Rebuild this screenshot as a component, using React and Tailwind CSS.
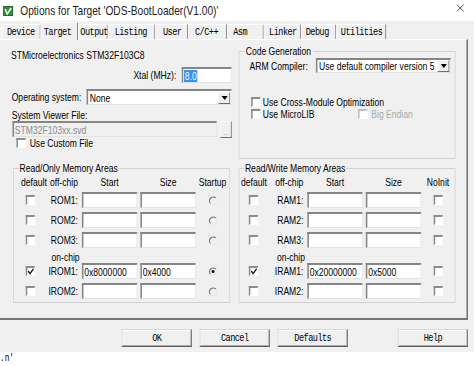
import React from "react";

const SUNKEN =
  "border-t-2 border-l-2 border-b border-r border-t-[#858585] border-l-[#858585] border-b-[#e3e3e3] border-r-[#e3e3e3]";
const RAISED =
  "bg-[#f0f0f0] border border-t-[#fafafa] border-l-[#fafafa] border-b-[#6b6b6b] border-r-[#6b6b6b]";

function Check({ checked = false, light = false }) {
  return (
    <span
      className={`relative inline-block shrink-0 w-[12px] h-[10px] bg-white border-t-2 border-l-2 border-b border-r border-b-white border-r-white ${
        light ? "border-t-[#bdbdbd] border-l-[#bdbdbd]" : "border-t-[#8c8c8c] border-l-[#8c8c8c]"
      }`}
    >
      {checked && (
        <svg className="absolute left-0 top-0" width="9" height="7" viewBox="0 0 9 7">
          <path d="M1 3 L3.5 5.6 L8 0.8" stroke="#1a1a1a" strokeWidth="1.6" fill="none" />
        </svg>
      )}
    </span>
  );
}

function Radio({ checked = false }) {
  return (
    <svg width="12" height="9" viewBox="0 0 9 9" preserveAspectRatio="none" className="shrink-0">
      <path d="M7.3 2.2 A3.6 3.6 0 0 0 2.2 7.3" stroke="#7a7a7a" strokeWidth="1.2" fill="none" />
      <path d="M7.3 2.2 A3.6 3.6 0 0 1 2.2 7.3" stroke="#e6e6e6" strokeWidth="1" fill="none" />
      {checked && <circle cx="4.6" cy="4.6" r="1.5" fill="#111" />}
    </svg>
  );
}

function Select({ value, className }) {
  return (
    <div className={`bg-white ${SUNKEN} h-full flex items-center ${className}`}>
      <span className="flex-1 pl-[2px] whitespace-nowrap overflow-hidden">{value}</span>
      <span className={`${RAISED} w-[15px] h-[12px] mr-[1px] flex items-center justify-center`}>
        <svg width="8" height="4" viewBox="0 0 8 4">
          <path d="M0 0H8L4 4Z" fill="#000" />
        </svg>
      </span>
    </div>
  );
}

function Field({ value = "" }) {
  return (
    <div className={`bg-white ${SUNKEN} w-[71px] h-[16px] flex items-center pl-[1px] whitespace-nowrap`}>
      {value}
    </div>
  );
}

function Btn({ children, className = "" }) {
  return (
    <div
      className={`h-[18px] w-[90px] flex items-center justify-center bg-[#f0f0f0] border border-t-[#d8d8d8] border-l-[#d8d8d8] border-b-[#5f5f5f] border-r-[#5f5f5f] shadow-[inset_-1px_-1px_0_#a8a8a8,inset_1px_1px_0_#ffffff] font-['Liberation_Mono',monospace] text-[11px] tracking-[-0.7px] leading-[12px] text-black ${className}`}
    >
      {children}
    </div>
  );
}

function MemRow({ check, label, start, size, last, checkPad }) {
  return (
    <div className="flex h-[16px] items-center">
      <div className={`w-[46px] flex items-center ${checkPad}`}>
        <Check checked={check} />
      </div>
      <div className="w-[41px] flex justify-end pr-[5px] whitespace-nowrap">{label}</div>
      <Field value={start} />
      <div className="w-[4px]" />
      <Field value={size} />
      <div className="flex-1 flex justify-center">{last}</div>
    </div>
  );
}

function MemGroup({ title, rw }) {
  const checkPad = rw ? "pl-[12px]" : "pl-[15px]";
  const pre = rw ? "RAM" : "ROM";
  const last = (i) => (rw ? <Check /> : <Radio checked={i} />);
  return (
    <fieldset className="w-[278px] h-[141px] border border-[#d2d2d2] flex flex-col">
      <legend className="ml-[6px] px-[1px] leading-[12px]">{title}</legend>
      <div className="flex mt-[2px] h-[12px] items-center whitespace-nowrap">
        <div className={`w-[46px] ${rw ? "pl-[2px]" : "pl-[9px]"}`}>default</div>
        <div className="w-[41px]">off-chip</div>
        <div className="w-[71px] text-center">Start</div>
        <div className="w-[4px]" />
        <div className="w-[71px] text-center">Size</div>
        <div className="flex-1 text-center">{rw ? "NoInit" : "Startup"}</div>
      </div>
      <div className="mt-[4px] flex flex-col gap-[4px]">
        <MemRow checkPad={checkPad} label={`${pre}1:`} last={last(false)} />
        <MemRow checkPad={checkPad} label={`${pre}2:`} last={last(false)} />
        <MemRow checkPad={checkPad} label={`${pre}3:`} last={last(false)} />
      </div>
      <div className="mt-[3px] h-[12px] flex">
        <div className="w-[46px]" />
        <div className="pl-[2px]">on-chip</div>
      </div>
      <div className="flex flex-col gap-[4px]">
        <MemRow
          checkPad={checkPad}
          check
          label={`I${pre}1:`}
          start={rw ? "0x20000000" : "0x8000000"}
          size={rw ? "0x5000" : "0x4000"}
          last={last(true)}
        />
        <MemRow checkPad={checkPad} label={`I${pre}2:`} last={last(false)} />
      </div>
    </fieldset>
  );
}

const TABS = [
  { label: "Device", cls: "w-[50px] pl-[6px]" },
  { label: "Target", cls: "w-[48px] pl-[3px]", sel: true },
  { label: "Output", cls: "w-[38px] pl-[2px]" },
  { label: "Listing", cls: "w-[61px] pl-[8px]" },
  { label: "User", cls: "w-[42px] pl-[9px]" },
  { label: "C/C++", cls: "w-[50px] pl-[8px]" },
  { label: "Asm", cls: "w-[47px] pl-[7px]" },
  { label: "Linker", cls: "w-[48px] pl-[6px]" },
  { label: "Debug", cls: "w-[45px] pl-[5px]" },
  { label: "Utilities", cls: "w-[64px] pl-[5px]" },
];

export default function App() {
  return (
    <div className="w-[474px] h-[366px] overflow-hidden bg-white">
      <div className="w-[608px] h-[366px] origin-top-left scale-x-[0.78] font-['Liberation_Sans',Arial,sans-serif] text-[11px] leading-[12px] text-black flex flex-col">
        {/* title bar */}
        <div className="h-[21px] shrink-0 bg-white flex items-center">
          <svg className="ml-[4px] shrink-0" width="13" height="10" viewBox="0 0 10 10" preserveAspectRatio="none">
            <rect x="0" y="0" width="10" height="10" fill="#2f8f3c" />
            <rect x="0.5" y="0.5" width="9" height="9" fill="none" stroke="#1d6a28" strokeWidth="1" />
            <path d="M2 3 L4 8 L8 2" stroke="#ffffff" strokeWidth="1.5" fill="none" />
          </svg>
          <span className="ml-[9px] text-[13px] leading-[16px] text-[#222] whitespace-nowrap">
            Options for Target 'ODS-BootLoader(V1.00)'
          </span>
          <svg className="ml-auto mr-[13px] self-start mt-[4px]" width="10" height="8" viewBox="0 0 10 8" preserveAspectRatio="none">
            <path d="M0.5 0.5 L9.5 7.5 M9.5 0.5 L0.5 7.5" stroke="#333" strokeWidth="1" />
          </svg>
        </div>

        {/* dialog body */}
        <div className="h-[331px] shrink-0 bg-[#f0f0f0] flex flex-col">
          {/* tabs */}
          <div className="h-[18px] flex items-end pl-[2px] font-['Liberation_Mono',monospace] text-[11px] tracking-[-0.7px] text-black">
            {TABS.map((t) =>
              t.sel ? (
                <div
                  key={t.label}
                  className={`${t.cls} h-[18px] -mb-px relative z-10 bg-[#f0f0f0] border-t border-l border-r border-t-white border-l-white border-r-[#6e6e6e] flex items-center whitespace-nowrap`}
                >
                  {t.label}
                </div>
              ) : (
                <div
                  key={t.label}
                  className={`${t.cls} h-[15px] border-t border-l border-r border-t-white border-l-white border-r-[#6e6e6e] flex items-center whitespace-nowrap`}
                >
                  {t.label}
                </div>
              )
            )}
          </div>

          {/* tab page */}
          <div className="h-[281px] w-[600px] shrink-0 border-t border-t-white border-r-2 border-r-[#767676] border-b-2 border-b-[#767676] flex flex-col">
            <div className="flex">
              {/* left column */}
              <div className="ml-[14px] w-[283px] flex flex-col">
                <div className="mt-[9px] h-[12px] whitespace-nowrap">STMicroelectronics STM32F103C8</div>
                <div className="mt-[6px] h-[16px] flex items-center justify-end">
                  <span className="whitespace-nowrap">Xtal (MHz):</span>
                  <div className={`ml-[7px] w-[64px] h-[16px] bg-white ${SUNKEN} flex items-center`}>
                    <span className="ml-[1px] bg-[#3390ff] text-white px-[1px] leading-[12px]">8.0</span>
                  </div>
                </div>
                <div className="mt-[6px] h-[16px] flex items-center">
                  <span className="ml-[1px] whitespace-nowrap">Operating system:</span>
                  <Select value="None" className="ml-auto w-[186px]" />
                </div>
                <div className="mt-[4px] h-[12px] ml-[1px] whitespace-nowrap">System Viewer File:</div>
                <div className="h-[16px] flex items-start">
                  <div className={`ml-[2px] w-[262px] h-[16px] bg-[#f0f0f0] ${SUNKEN} flex items-center pl-[1px] text-[#8c8c8c] whitespace-nowrap`}>
                    STM32F103xx.svd
                  </div>
                  <div className={`ml-auto w-[15px] h-[17px] ${RAISED} flex items-end justify-center text-[8px] leading-[8px] text-[#9a9a9a]`}>
                    ...
                  </div>
                </div>
                <div className="mt-[1px] h-[10px] flex items-center ml-[7px]">
                  <Check />
                  <span className="ml-[5px] whitespace-nowrap">Use Custom File</span>
                </div>
              </div>

              {/* code generation */}
              <fieldset className="ml-[9px] mt-[5px] w-[278px] h-[114px] border border-[#d2d2d2] flex flex-col">
                <legend className="ml-[6px] px-[2px] leading-[12px]">Code Generation</legend>
                <div className="mt-[1px] h-[15px] flex items-center">
                  <span className="ml-[13px] whitespace-nowrap">ARM Compiler:</span>
                  <Select value="Use default compiler version 5" className="ml-auto mr-[5px] w-[173px]" />
                </div>
                <div className="mt-[24px] h-[10px] flex items-center ml-[15px]">
                  <Check />
                  <span className="ml-[3px] whitespace-nowrap">Use Cross-Module Optimization</span>
                </div>
                <div className="mt-[2px] h-[10px] flex items-center ml-[15px]">
                  <div className="w-[137px] flex items-center">
                    <Check />
                    <span className="ml-[3px] whitespace-nowrap">Use MicroLIB</span>
                  </div>
                  <Check light />
                  <span className="ml-[5px] whitespace-nowrap text-[#a8a8a8]">Big Endian</span>
                </div>
              </fieldset>
            </div>

            <div className="flex mt-[3px]">
              <div className="ml-[17px]">
                <MemGroup title="Read/Only Memory Areas" />
              </div>
              <div className="ml-[11px]">
                <MemGroup title="Read/Write Memory Areas" rw />
              </div>
            </div>
          </div>

          {/* buttons */}
          <div className="flex pt-[9px] pl-[156px]">
            <Btn>OK</Btn>
            <Btn className="ml-[10px]">Cancel</Btn>
            <Btn className="ml-[10px]">Defaults</Btn>
            <Btn className="ml-[64px] w-[88px]">Help</Btn>
          </div>
        </div>

        {/* below dialog */}
        <div className="flex-1 bg-white flex items-center font-['Liberation_Mono',monospace] text-[10px] leading-[12px]">
          <span className="ml-0">.n'</span>
        </div>
      </div>
    </div>
  );
}
